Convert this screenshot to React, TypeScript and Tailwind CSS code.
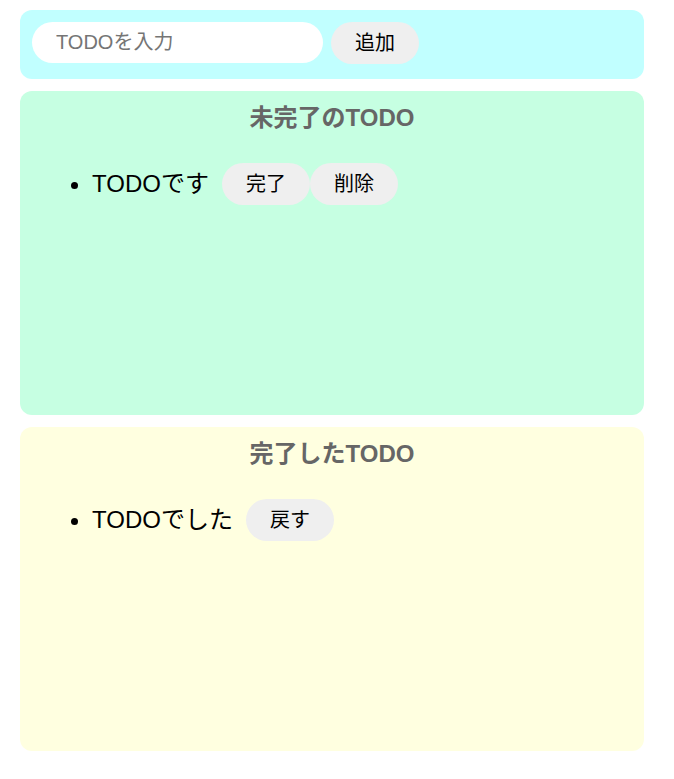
import React from "react";

const font = { fontFamily: '"Liberation Sans", "Noto Sans CJK JP", sans-serif' };

function Btn({ children }: { children: React.ReactNode }) {
  return (
    <button className="h-[42px] w-[88px] rounded-[24px] bg-[#efefef] text-[20px] leading-[24px] text-black">
      {children}
    </button>
  );
}

export default function App() {
  return (
    <div className="pt-[10px] pl-[20px] flex flex-col gap-[12px] bg-white min-h-[779px]" style={font}>
      <div className="w-[624px] h-[69px] bg-[#c1ffff] rounded-[12px] p-[12px] flex items-start gap-[8px]">
        <input
          placeholder="TODOを入力"
          className="w-[291px] h-[41px] rounded-[24px] bg-white px-[24px] text-[20px] outline-none placeholder:text-[#757575]"
        />
        <Btn>追加</Btn>
      </div>
      <div className="w-[624px] h-[324px] bg-[#c6ffe2] rounded-[12px] p-[12px]">
        <p className="text-center font-bold text-[24px] leading-[30px] mb-[30px] text-[#666]">未完了のTODO</p>
        <ul className="list-disc pl-[60px]">
          <div className="flex items-center">
            <li className="text-[24px] leading-[28px] text-black mr-[13px]">TODOです</li>
            <Btn>完了</Btn>
            <Btn>削除</Btn>
          </div>
        </ul>
      </div>
      <div className="w-[624px] h-[324px] bg-[#ffffe0] rounded-[12px] p-[12px]">
        <p className="text-center font-bold text-[24px] leading-[30px] mb-[30px] text-[#666]">完了したTODO</p>
        <ul className="list-disc pl-[60px]">
          <div className="flex items-center">
            <li className="text-[24px] leading-[28px] text-black mr-[13px]">TODOでした</li>
            <Btn>戻す</Btn>
          </div>
        </ul>
      </div>
    </div>
  );
}
